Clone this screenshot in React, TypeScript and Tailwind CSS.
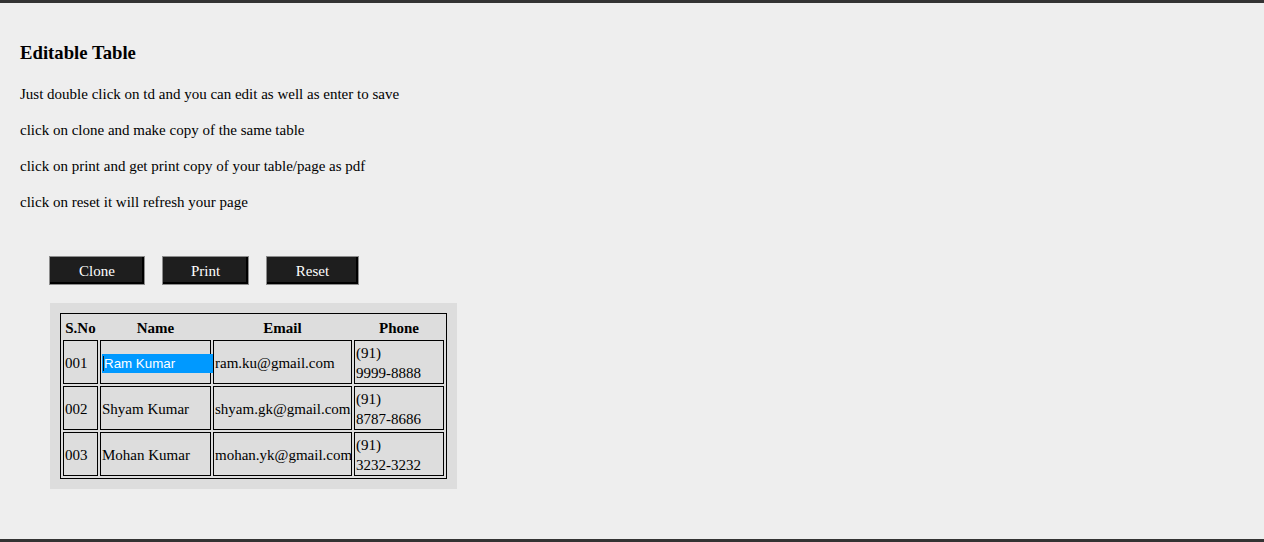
import React from "react"

const rows = [
  { id: "001", name: "Ram Kumar", email: "ram.ku@gmail.com", code: "(91)", phone: "9999-8888", editing: true },
  { id: "002", name: "Shyam Kumar", email: "shyam.gk@gmail.com", code: "(91)", phone: "8787-8686" },
  { id: "003", name: "Mohan Kumar", email: "mohan.yk@gmail.com", code: "(91)", phone: "3232-3232" },
]

const notes = [
  "Just double click on td and you can edit as well as enter to save",
  "click on clone and make copy of the same table",
  "click on print and get print copy of your table/page as pdf",
  "click on reset it will refresh your page",
]

function ActionButton({ label, width }: { label: string; width: string }) {
  return (
    <button
      className={`${width} h-[29px] border border-[#8c8c8c] bg-[#1e1e1e] pt-[2px] text-[15px] leading-[17px] text-white shadow-[inset_-2px_-2px_0_#000]`}
    >
      {label}
    </button>
  )
}

export default function App() {
  return (
    <div
      className="box-border h-[542px] border-t-[3px] border-b-[3px] border-[#333] bg-[#eeeeee] text-black"
      style={{ fontFamily: '"Liberation Serif", "Times New Roman", serif' }}
    >
      <h3 className="mt-[39px] pl-[20px] text-[18.72px] font-bold leading-[22px]">Editable Table</h3>
      {notes.map((note, i) => (
        <p key={i} className={`pl-[20px] text-[15px] leading-[18px] ${i === 0 ? "mt-[21px]" : "mt-[18px]"}`}>
          {note}
        </p>
      ))}

      <div className="mt-[45px] ml-[49px] flex gap-[17px]">
        <ActionButton label="Clone" width="w-[96px]" />
        <ActionButton label="Print" width="w-[87px]" />
        <ActionButton label="Reset" width="w-[93px]" />
      </div>

      <div className="mt-[18px] ml-[50px] inline-block bg-[#dddddd] p-[10px]">
        <table className="w-[387px] table-fixed border-separate border-spacing-[2px] border border-black text-[15px] leading-[20px]">
          <thead>
            <tr>
              <th className="w-[35px] px-px pt-[2px] pb-0 text-center font-bold">S.No</th>
              <th className="w-[111px] px-px pt-[2px] pb-0 text-center font-bold">Name</th>
              <th className="w-[139px] px-px pt-[2px] pb-0 text-center font-bold">Email</th>
              <th className="w-[90px] px-px pt-[2px] pb-0 text-center font-bold">Phone</th>
            </tr>
          </thead>
          <tbody>
            {rows.map((row) => (
              <tr key={row.id} className="h-[44px]">
                <td className="border border-black px-px pt-[2px] pb-0 align-middle">{row.id}</td>
                <td className="border border-black px-px pt-[2px] pb-0 align-middle whitespace-nowrap">
                  {row.editing ? (
                    <span
                      className="relative block h-[19px] w-[111px] bg-[#0099ff] pl-[2px] text-[13.33px] leading-[19px] text-white"
                      style={{ fontFamily: '"Liberation Sans", Arial, sans-serif' }}
                    >
                      <span className="absolute left-[1px] top-[2px] h-[15px] w-px bg-[#1a1a1a]" />
                      {row.name}
                    </span>
                  ) : (
                    row.name
                  )}
                </td>
                <td className="border border-black px-px pt-[2px] pb-0 align-middle whitespace-nowrap">{row.email}</td>
                <td className="border border-black px-px pt-[2px] pb-0 align-middle">
                  {row.code}
                  <br />
                  {row.phone}
                </td>
              </tr>
            ))}
          </tbody>
        </table>
      </div>
    </div>
  )
}
